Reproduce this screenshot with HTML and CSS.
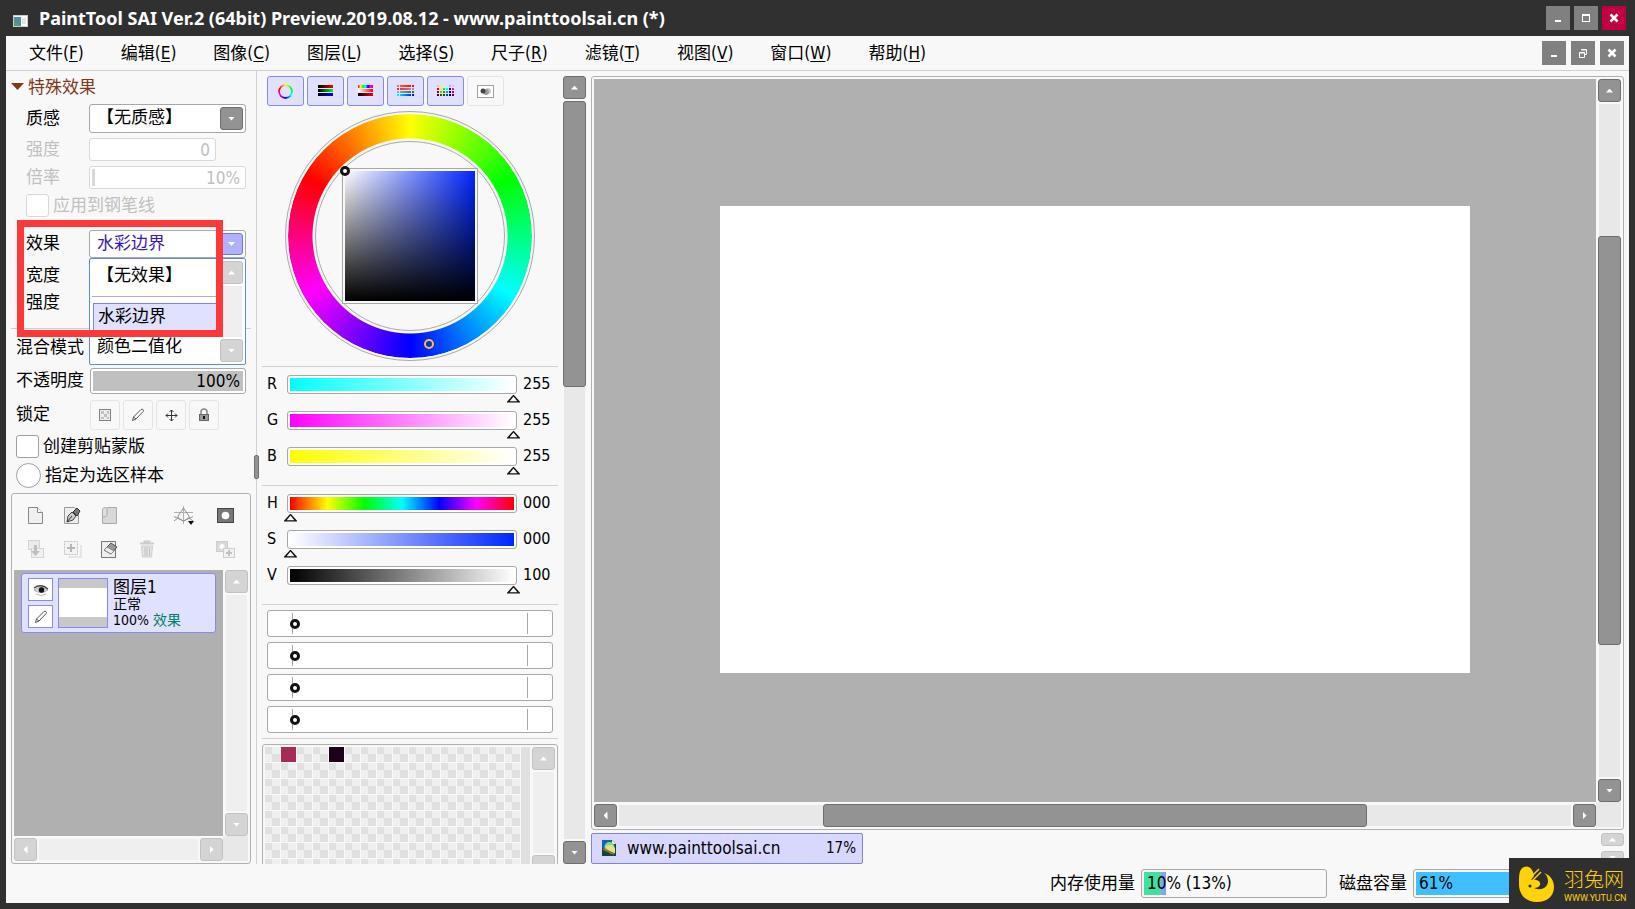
FILE: index.html
```html
<!DOCTYPE html>
<html lang="zh-CN">
<head>
<meta charset="utf-8">
<title>PaintTool SAI Ver.2</title>
<link rel="stylesheet" href="styles.css">
</head>
<body>
<header class="titlebar">
  <svg class="app-icon" width="15" height="12" viewBox="0 0 15 12"><rect x=".5" y=".5" width="14" height="11" fill="#fff" stroke="#c8ccd0"/><rect x="1" y="2" width="7" height="9" fill="#4f8fa0"/><path d="M1 6l7 5H1z" fill="#4fa06c"/><path d="M9 4h4M9 6h4M9 8h4" stroke="#c8c8c8"/></svg>
  <h1 class="title">PaintTool SAI Ver.2 (64bit) Preview.2019.08.12 - www.painttoolsai.cn (*)</h1>
  <div class="win-buttons win-buttons-main">
    <button class="win-btn" aria-label="最小化"><svg width="24" height="24"><path d="M9 14h6v2H9z" fill="#fff"/></svg></button>
    <button class="win-btn" aria-label="最大化"><svg width="24" height="24"><path d="M8 8h8v8H8zM9 10v5h6v-5z" fill="#fff" fill-rule="evenodd"/></svg></button>
    <button class="win-btn win-close" aria-label="关闭"><svg width="24" height="24"><path d="M8.500 8.500l7 7M15.500 8.500l-7 7" stroke="#fff" stroke-width="2.600"/></svg></button>
  </div>
</header>
<div class="window">
  <nav class="menubar">
    <button class="menu">文件(<u>F</u>)</button>
    <button class="menu">编辑(<u>E</u>)</button>
    <button class="menu">图像(<u>C</u>)</button>
    <button class="menu">图层(<u>L</u>)</button>
    <button class="menu">选择(<u>S</u>)</button>
    <button class="menu">尺子(<u>R</u>)</button>
    <button class="menu">滤镜(<u>T</u>)</button>
    <button class="menu">视图(<u>V</u>)</button>
    <button class="menu">窗口(<u>W</u>)</button>
    <button class="menu">帮助(<u>H</u>)</button>
    <div class="win-buttons win-buttons-doc">
      <button class="win-btn" aria-label="最小化文档"><svg width="24" height="24"><path d="M9 14h6v2H9z" fill="#fff"/></svg></button>
      <button class="win-btn" aria-label="还原文档"><svg width="24" height="24"><path d="M10.500 8.500h5v5h-2M10 9h6" fill="none" stroke="#fff"/><path d="M8.500 11.500h5v5h-5zM8 12h6" fill="none" stroke="#fff"/></svg></button>
      <button class="win-btn" aria-label="关闭文档"><svg width="24" height="24"><path d="M8.500 8.500l7 7M15.500 8.500l-7 7" stroke="#fff" stroke-width="2.600"/></svg></button>
    </div>
  </nav>

  <main class="workspace">
    <section class="left">
      <div class="effects">
        <h2 class="effects-title">特殊效果</h2>
        <div class="row row-select">
          <label class="label" for="texture">质感</label>
          <div class="combo"><select id="texture"><option>【无质感】</option></select><span class="combo-arrow"><i class="arrow down"></i></span></div>
        </div>
        <div class="row row-field disabled">
          <label class="label" for="tex-strength">强度</label>
          <input class="field field-short" id="tex-strength" value="0" disabled>
        </div>
        <div class="row row-field disabled">
          <label class="label" for="tex-scale">倍率</label>
          <input class="field field-scale" id="tex-scale" value="10%" disabled>
        </div>
        <label class="row row-field check disabled"><input type="checkbox" class="box" disabled><span class="check-text">应用到钢笔线</span></label>
        <div class="row row-effect">
          <label class="label" for="effect">效果</label>
          <div class="combo combo-open">
            <select id="effect"><option>水彩边界</option></select><span class="combo-arrow"><i class="arrow down"></i></span>
            <div class="popup">
              <ul class="popup-list">
                <li class="popup-item popup-none">【无效果】</li>
                <li class="popup-item popup-selected">水彩边界</li>
                <li class="popup-item popup-last">颜色二值化</li>
              </ul>
              <div class="scroll vertical pale">
                <button class="sb" aria-label="向上"><i class="arrow up"></i></button>
                <div class="track"></div>
                <button class="sb" aria-label="向下"><i class="arrow down"></i></button>
              </div>
            </div>
          </div>
        </div>
        <div class="effect-labels"><div class="label-row">宽度</div><div class="label-row">强度</div></div>
        <div class="highlight"></div>
      </div>
      <div class="layer-props">
        <div class="row row-effect"><span class="label">混合模式</span></div>
        <div class="row row-opacity"><label class="label" for="opacity">不透明度</label><input class="field field-opacity" id="opacity" value="100%"></div>
        <div class="row row-lock"><span class="label">锁定</span>
          <div class="lock-buttons">
            <button class="flat-btn" aria-label="锁定透明像素"><svg width="12" height="12"><rect x=".5" y=".5" width="11" height="11" fill="#eee" stroke="#808080"/><path d="M2 2h3v3H2zM8 2h2v3H8zM5 5h3v3H5zM2 8h3v2H2zM8 8h2v2H8z" fill="#c0c0c0"/></svg></button>
            <button class="flat-btn" aria-label="锁定绘图"><svg width="14" height="14"><path d="M1.500 12.500l1-3.500 7.500-7.500q1.500-.5 2 0 .8.800.2 2L5 11zM2.500 9L5 11" fill="#fff" stroke="#555"/></svg></button>
            <button class="flat-btn" aria-label="锁定移动"><svg width="13" height="13"><path d="M6.500 1v11M1 6.500h11M4.500 3l2-2 2 2M4.500 10l2 2 2-2M3 4.500l-2 2 2 2M10 4.500l2 2-2 2" fill="none" stroke="#333"/></svg></button>
            <button class="flat-btn" aria-label="全部锁定"><svg width="12" height="14"><path d="M3 7V4q0-3 3-3t3 3v3" fill="none" stroke="#888" stroke-width="1.500"/><rect x="1.500" y="6.500" width="9" height="6" fill="#999" stroke="#666"/><path d="M6 8v3" stroke="#111" stroke-width="2"/></svg></button>
          </div>
        </div>
        <label class="row row-check check"><input type="checkbox" class="box"><span class="check-text">创建剪贴蒙版</span></label>
        <label class="row row-radio check"><input type="radio" class="circle"><span class="check-text">指定为选区样本</span></label>
      </div>
      <div class="layer-panel">
        <div class="layer-tools">
          <button class="tool" aria-label="新建图层"><svg width="15" height="17"><path d="M.5.500h9l5 5v11H.5z" fill="#f0f0f0" stroke="#888"/><path d="M9.500.500v5h5" fill="#fff" stroke="#888"/></svg></button>
          <button class="tool" aria-label="新建钢笔图层"><svg width="17" height="17"><path d="M.5.500h10l4 4v12H.5z" fill="#eee" stroke="#999"/><path d="M3 15l1-6 4-4 4 4-3 4z" fill="#ccc" stroke="#444"/><path d="M9 5l4-4 3 3-3 5z" fill="#777" stroke="#333"/><path d="M3 15l5-6" stroke="#333"/></svg></button>
          <button class="tool" aria-label="新建图层组"><svg width="15" height="17"><path d="M.5 3.500v13h14V.500H5" fill="#d8d8d8" stroke="#aaa"/><path d="M.5 10V3q0-2.500 2.500-2.500T5 3v5q-1 2-4 2z" fill="#e0e0e0" stroke="#aaa"/></svg></button>
          <span></span>
          <button class="tool" aria-label="透视尺"><svg width="20" height="19"><path d="M9.500 0v18M0 6.500h19" fill="none" stroke="#b0b0b0"/><path d="M9.500 2L4 10v2l5.500 3 5.500-3v-2zM9.500 15L0 10.500M9.500 15L19 10.500M4 12l-4 3M15 12l4 3" fill="none" stroke="#909090"/><path d="M14 15h6l-3 4z" fill="#111"/></svg></button>
          <button class="tool" aria-label="图层蒙版"><svg width="17" height="15"><rect x=".5" y=".5" width="16" height="14" fill="#777" stroke="#444"/><circle cx="8.500" cy="7.500" r="3.800" fill="#fff"/></svg></button>
          <button class="tool" aria-label="向下转写"><svg width="16" height="18" opacity=".6"><rect x=".5" y=".5" width="11" height="9" fill="#e4e4e4" stroke="#bbb"/><rect x="3.500" y="8.500" width="12" height="9" fill="#eee" stroke="#bbb"/><path d="M6 5h3v6h3l-4.500 5L3 11h3z" fill="#999"/></svg></button>
          <button class="tool" aria-label="复制图层"><svg width="18" height="17" opacity=".7"><path d="M4 16h13V4" fill="none" stroke="#ddd" stroke-width="2"/><rect x=".5" y=".5" width="13" height="13" fill="#f2f2f2" stroke="#aaa" stroke-dasharray="2 1"/><path d="M7 3v8M3 7h8" stroke="#999" stroke-width="2"/></svg></button>
          <button class="tool" aria-label="清除图层"><svg width="17" height="17"><path d="M.5.500h14v16H.5z" fill="#eee" stroke="#777"/><path d="M3 9l7-7 6 4-6 7z" fill="#999" stroke="#555"/><path d="M3 9l3-3 7 4-3 3z" fill="#eee" stroke="#888"/></svg></button>
          <button class="tool" aria-label="删除图层"><svg width="16" height="18" opacity=".7"><path d="M1 3.500h14M5.500 3V1.500h5V3" fill="none" stroke="#bbb" stroke-width="2"/><path d="M2.500 6h11l-1 11h-9z" fill="#ddd" stroke="#bbb"/><path d="M6 7v9M8 7v9M10.500 7v9" stroke="#aaa"/></svg></button>
          <span></span>
          <button class="tool" aria-label="添加蒙版"><svg width="19" height="17" opacity=".7"><rect x=".5" y=".5" width="11" height="10" fill="#ccc" stroke="#bbb"/><circle cx="6" cy="5.500" r="2.500" fill="#fff"/><rect x="7.500" y="7.500" width="11" height="9" fill="#f0f0f0" stroke="#bbb"/><path d="M13 9v6M10 12h6" stroke="#aaa" stroke-width="2"/></svg></button>
        </div>
        <div class="layer-scroll">
          <div class="layer-list">
            <article class="layer">
              <div class="layer-flags">
                <button class="flag" aria-label="显示图层"><svg width="16" height="12"><path d="M1 6q7-5 14 0-7 5-14 0z" fill="#ddd" stroke="#aaa"/><path d="M1 4q7-5 14 1" fill="none" stroke="#444" stroke-width="1.500"/><circle cx="8.500" cy="6" r="2.800" fill="#111"/><path d="M3 10q5 3 10 0" fill="none" stroke="#bbb"/></svg></button>
                <button class="flag" aria-label="编辑图层"><svg width="14" height="14"><path d="M1.500 12.500l1-3.500 7.500-7.500q1.500-.5 2 0 .8.800.2 2L5 11zM2.500 9L5 11" fill="#fff" stroke="#555"/></svg></button>
              </div>
              <div class="thumb"><div class="thumb-image"></div></div>
              <div class="layer-text"><div class="layer-name">图层1</div><div class="layer-mode">正常</div><div class="layer-mode">100% <span class="layer-effect">效果</span></div></div>
            </article>
          </div>
          <div class="scroll vertical pale">
            <button class="sb" aria-label="向上"><i class="arrow up"></i></button><div class="track"></div><button class="sb" aria-label="向下"><i class="arrow down"></i></button>
          </div>
          <div class="scroll horizontal pale">
            <button class="sb" aria-label="向左"><i class="arrow back"></i></button><div class="track"></div><button class="sb" aria-label="向右"><i class="arrow next"></i></button>
          </div>
          <div class="corner"></div>
        </div>
      </div>
      <div class="splitter"></div>
    </section>

    <section class="middle">
      <div class="color-panel">
        <div class="color-tabs">
          <button class="color-tab on" aria-label="色环"><span class="mini-ring"></span></button>
          <button class="color-tab on" aria-label="RGB滑块"><svg width="15" height="12"><defs><linearGradient id="r"><stop stop-color="#000"/><stop offset="1" stop-color="red"/></linearGradient><linearGradient id="g"><stop stop-color="#000"/><stop offset="1" stop-color="lime"/></linearGradient><linearGradient id="b"><stop stop-color="#000"/><stop offset="1" stop-color="blue"/></linearGradient></defs><rect width="15" height="3" fill="url(#r)"/><rect y="4" width="15" height="3" fill="url(#g)"/><rect y="8" width="15" height="3" fill="url(#b)"/></svg></button>
          <button class="color-tab on" aria-label="HSV滑块"><svg width="15" height="12"><defs><linearGradient id="h"><stop stop-color="red"/><stop offset=".17" stop-color="#ff0"/><stop offset=".33" stop-color="lime"/><stop offset=".5" stop-color="cyan"/><stop offset=".67" stop-color="blue"/><stop offset=".83" stop-color="#f0f"/><stop offset="1" stop-color="red"/></linearGradient><linearGradient id="s"><stop stop-color="#fff"/><stop offset="1" stop-color="red"/></linearGradient></defs><rect width="15" height="3" fill="url(#h)"/><rect y="4" width="15" height="3" fill="url(#s)"/><rect y="8" width="15" height="3" fill="url(#r)"/></svg></button>
          <button class="color-tab on" aria-label="混色条"><svg width="17" height="12"><defs><linearGradient id="m1"><stop stop-color="#ff7a1a"/><stop offset="1" stop-color="red"/></linearGradient><linearGradient id="m2"><stop stop-color="#ff1060"/><stop offset="1" stop-color="#b090c0"/></linearGradient><linearGradient id="m3"><stop stop-color="#80c0a0"/><stop offset="1" stop-color="#207030"/></linearGradient><linearGradient id="m4"><stop stop-color="cyan"/><stop offset="1" stop-color="blue"/></linearGradient></defs><rect width="17" height="2" fill="url(#m1)"/><rect y="3" width="17" height="2" fill="url(#m2)"/><rect y="6" width="17" height="2" fill="url(#m3)"/><rect y="9" width="17" height="2" fill="url(#m4)"/><path d="M2 0h1v11H2zM14 0h1v11h-1z" fill="#e0e0ff"/></svg></button>
          <button class="color-tab on" aria-label="色板"><svg width="17" height="12"><g stroke-width="2" stroke-dasharray="2 1"><path d="M0 1h3" stroke="#ffb0b0"/><path d="M3 1h3" stroke="#ffe0a0"/><path d="M6 1h3" stroke="#d0ffb0"/><path d="M9 1h3" stroke="#b0ffe0"/><path d="M12 1h3" stroke="#b0b0ff"/><path d="M15 1h2" stroke="#ffb0ff"/><path d="M0 4h3" stroke="red"/><path d="M3 4h3" stroke="#ff0"/><path d="M6 4h3" stroke="lime"/><path d="M9 4h3" stroke="cyan"/><path d="M12 4h3" stroke="blue"/><path d="M15 4h2" stroke="#f0f"/><path d="M0 7h3" stroke="#a00"/><path d="M3 7h3" stroke="#aa0"/><path d="M6 7h3" stroke="#0a0"/><path d="M9 7h3" stroke="#0aa"/><path d="M12 7h3" stroke="#00a"/><path d="M15 7h2" stroke="#a0a"/><path d="M0 10h3" stroke="#500"/><path d="M3 10h3" stroke="#440"/><path d="M6 10h3" stroke="#050"/><path d="M9 10h3" stroke="#055"/><path d="M12 10h3" stroke="#005"/><path d="M15 10h2" stroke="#505"/></g></svg></button>
          <button class="color-tab" aria-label="便笺"><svg width="17" height="13"><rect x=".5" y=".5" width="16" height="12" fill="#fff" stroke="#a0a0a0"/><circle cx="11" cy="6" r="3" fill="#ccc"/><circle cx="9" cy="7" r="3" fill="#999"/><circle cx="6" cy="6" r="2.500" fill="#444"/></svg></button>
        </div>
        <div class="wheel">
          <div class="wheel-ring"></div>
          <div class="wheel-inner"></div>
          <div class="sv"></div>
          <span class="marker marker-sv"></span>
          <span class="marker marker-hue"></span>
        </div>
        <div class="sliders">
          <div class="slider"><label for="s-r">R</label><div class="bar"><div class="fill fill-r"></div><input id="s-r" type="range" max="255" value="255"></div><output>255</output></div>
          <div class="slider"><label for="s-g">G</label><div class="bar"><div class="fill fill-g"></div><input id="s-g" type="range" max="255" value="255"></div><output>255</output></div>
          <div class="slider"><label for="s-b">B</label><div class="bar"><div class="fill fill-b"></div><input id="s-b" type="range" max="255" value="255"></div><output>255</output></div>
        </div>
        <div class="sliders">
          <div class="slider"><label for="s-h">H</label><div class="bar"><div class="fill fill-h"></div><input id="s-h" type="range" max="360" value="0"></div><output>000</output></div>
          <div class="slider"><label for="s-s">S</label><div class="bar"><div class="fill fill-s"></div><input id="s-s" type="range" max="100" value="0"></div><output>000</output></div>
          <div class="slider"><label for="s-v">V</label><div class="bar"><div class="fill fill-v"></div><input id="s-v" type="range" max="100" value="100"></div><output>100</output></div>
        </div>
        <div class="mixers">
          <div class="mixer"><span class="marker"></span></div>
          <div class="mixer"><span class="marker"></span></div>
          <div class="mixer"><span class="marker"></span></div>
          <div class="mixer"><span class="marker"></span></div>
        </div>
        <div class="swatches">
          <div class="swatch-grid"><span class="swatch swatch-rose"></span><span class="swatch swatch-plum"></span></div>
          <div class="swatch-edge"></div>
          <div class="scroll vertical pale">
            <button class="sb" aria-label="向上"><i class="arrow up"></i></button><div class="track"></div><button class="sb" aria-label="向下"><i class="arrow down"></i></button>
          </div>
        </div>
      </div>
      <div class="scroll vertical">
        <button class="sb" aria-label="向上"><i class="arrow up"></i></button>
        <div class="track"><div class="grip grip-panel"></div><div class="rest rest-panel"></div></div>
        <button class="sb" aria-label="向下"><i class="arrow down"></i></button>
      </div>
    </section>

    <section class="right">
      <div class="view">
        <div class="stage"><div class="paper"></div></div>
        <div class="scroll vertical">
          <button class="sb" aria-label="向上"><i class="arrow up"></i></button>
          <div class="track"><div class="rest rest-v"></div><div class="grip grip-v"></div><div class="rest rest-v"></div></div>
          <button class="sb" aria-label="向下"><i class="arrow down"></i></button>
        </div>
        <div class="scroll horizontal">
          <button class="sb" aria-label="向左"><i class="arrow back"></i></button>
          <div class="track"><div class="rest rest-h"></div><div class="grip grip-h"></div><div class="rest rest-h"></div></div>
          <button class="sb" aria-label="向右"><i class="arrow next"></i></button>
        </div>
        <div class="corner"></div>
      </div>
      <div class="doc-tabs">
        <button class="doc-tab">
          <svg width="14" height="16"><path d="M0 0h10l4 4v12H0z" fill="#0a4a3a"/><path d="M0 0h10v3L4 8H0z" fill="#1060c0"/><path d="M10 0l4 4h-4z" fill="#eee"/><circle cx="7.500" cy="7" r="5" fill="#80e070"/><path d="M3 6l7-1 3 3v5l-4 1z" fill="#e8e090"/><path d="M1 9l11 5" stroke="#a06828" stroke-width="2"/></svg>
          <span class="doc-name">www.painttoolsai.cn</span><span class="doc-zoom">17%</span>
        </button>
        <div class="tab-scroll"><button class="sb" aria-label="上一行"><i class="arrow up"></i></button><button class="sb" aria-label="下一行"><i class="arrow down"></i></button></div>
      </div>
    </section>
  </main>

  <footer class="status">
    <div class="stat"><span>内存使用量</span><div class="meter meter-memory">10% (13%)</div></div>
    <div class="stat"><span>磁盘容量</span><div class="meter meter-disk">61%</div></div>
  </footer>
</div>
<div class="watermark">
  <svg width="36" height="37" viewBox="0 0 36 37"><path d="M5 1C10-1 14 3 15 10l-3 4C19 13 22 16 21 19c-1 2-3 3-6 3 7 3 13 0 14-6 0-4-1-7-4-9 6 2 10 7 10 14 0 9-7 15-17 15C7 36 0 29 0 18 0 9 0 3 5 1z" fill="#ffd20a"/><path d="M10 13L20 3M14 14l8-8" stroke="#ffd20a" stroke-width="1.500" fill="none"/><circle cx="11" cy="20" r="1.600" fill="#2f2f2f"/></svg>
  <div class="watermark-text"><div class="watermark-name">羽兔网</div><div class="watermark-url">WWW.YUTU.CN</div></div>
</div>
</body>
</html>
```
FILE: styles.css
```css
* { box-sizing: border-box; }
body {
  margin: 0;
  height: 100vh;
  display: flex;
  flex-direction: column;
  padding: 0 6px 6px;
  background: #303030;
  color: #000;
  font: 400 17px/20px "DejaVu Sans Condensed", "Noto Sans CJK SC", sans-serif;
  overflow: hidden;
}
button, input, select { font: inherit; color: inherit; margin: 0; padding: 0; border: 0; }
button { display: flex; align-items: center; justify-content: center; background: none; }
h1, h2, ul { margin: 0; padding: 0; list-style: none; }
svg { display: block; flex: none; }

/* title bar and menu */
.titlebar { display: flex; align-items: center; height: 36px; flex: none; padding: 0 3px 0 7px; }
.app-icon { margin-top: 6px; }
.title { flex: 1; margin-left: 11px; color: #fff; font: bold 18px/20px "Noto Sans", sans-serif; white-space: nowrap; }
.win-buttons { display: flex; }
.win-buttons-main { gap: 4px; }
.win-buttons-doc { gap: 5px; margin-left: auto; }
.win-btn { width: 24px; height: 24px; background: #808080; }
.win-close { background: #c00040; }
.window { flex: 1; min-height: 0; display: flex; flex-direction: column; background: #f8f8f8; }
.menubar { display: flex; align-items: center; gap: 37px; height: 35px; flex: none; padding: 0 5px 0 23px; border-bottom: 1px solid #d0d0d0; }
.menu { white-space: nowrap; }
.menu u { text-underline-offset: 2px; text-decoration-thickness: 1px; }
.workspace { flex: 1; min-height: 0; display: flex; }

/* scroll bars */
.scroll { display: flex; gap: 2px; }
.vertical { flex-direction: column; width: 23px; }
.horizontal { height: 23px; }
.sb { width: 23px; height: 23px; flex: none; background: #939393; border: 1px solid #6e6e6e; border-radius: 3px; }
.track { flex: 1; min-width: 0; min-height: 0; display: flex; background: #e8e8e8; }
.vertical .track { flex-direction: column; margin: 0 1px; }
.horizontal .track { margin: 1px 0; }
.grip { background: #939393; border: 1px solid #6e6e6e; border-radius: 3px; }
.vertical .grip { margin: 0 -1px; }
.horizontal .grip { margin: -1px 0; }
.pale .track { background: #efefef; }
.pale .sb, .tab-scroll .sb { background: #d4d4d4; border-color: #c2c2c2; }
.arrow { width: 7px; height: 4px; background: #fff; }
.up { clip-path: polygon(50% 0, 100% 100%, 0 100%); }
.down { clip-path: polygon(0 0, 100% 0, 50% 100%); }
.back { width: 4px; height: 8px; clip-path: polygon(100% 0, 100% 100%, 0 50%); }
.next { width: 4px; height: 8px; clip-path: polygon(0 0, 100% 50%, 0 100%); }
.corner { background: #e8e8e8; margin: -2px 0 0 -2px; }
.grip-panel { flex: 285; }
.rest-panel { flex: 453; }
.rest-v { flex: 133; }
.grip-v { flex: 408; }
.rest-h { flex: 204; }
.grip-h { flex: 544; }

/* left column */
.left { position: relative; width: 251px; flex: none; display: flex; flex-direction: column; padding: 0 5px; border-right: 1px solid #d0d0d0; }
.effects { position: relative; display: flex; flex-direction: column; gap: 5px; padding-bottom: 12px; border-bottom: 1px solid #d0d0d0; }
.effects-title { display: flex; align-items: center; gap: 4px; height: 28px; padding-top: 3px; font-size: 17px; font-weight: 400; color: #803818; }
.effects-title::before { content: ""; width: 13px; height: 7px; background: #803818; clip-path: polygon(0 0, 100% 0, 50% 100%); }
.row { display: flex; align-items: center; }
.effects .row { padding-left: 15px; margin-right: 5px; }
.effects .label { width: 63px; flex: none; }
.label, .check-text { padding-bottom: 2px; }
.disabled { color: #c0c0c0; }
.row-select { height: 29px; }
.row-field { height: 23px; }
.row-effect { height: 28px; }
.effects .row-effect { margin-top: 8px; }
.combo { position: relative; flex: 1; align-self: stretch; background: #fff; border: 1px solid #a8a8a8; border-radius: 3px; }
.combo select { appearance: none; width: 100%; height: 100%; padding: 0 26px 3px 7px; background: none; outline: 0; }
.combo-arrow { position: absolute; top: 2px; right: 2px; bottom: 2px; width: 23px; display: flex; align-items: center; justify-content: center; background: #939393; border: 1px solid #6e6e6e; border-radius: 3px; pointer-events: none; }
.combo-open select { color: #3818c0; }
.combo-open .combo-arrow { background: #b0b0ff; border-color: #7070ff; }
.popup { position: absolute; top: 27px; left: -1px; right: -1px; height: 107px; z-index: 1; display: flex; gap: 3px; padding: 2px; background: #fff; border: 1px solid #5a8ed8; border-radius: 2px; }
.popup-list { flex: 1; display: flex; flex-direction: column; }
.popup-item { height: 28px; line-height: 26px; padding-left: 5px; }
.popup-none { height: 36px; line-height: 28px; border-bottom: 1px solid #b0b0b0; }
.popup-selected { margin-top: 6px; padding-left: 4px; margin-left: 1px; line-height: 24px; border: 1px solid #8080f8; background: #e0e0ff; }
.popup-last { line-height: 30px; }
.field { width: 100%; min-width: 0; height: 100%; padding: 0 6px; text-align: right; background: #fff; border: 1px solid #a8a8a8; border-radius: 3px; }
.disabled .field { padding: 0 5px; border-color: #d8d8d8; }
.field-short { margin-right: 30px; }
.field-scale { background: linear-gradient(#d8d8d8, #d8d8d8) 2px 2px / 3px 17px no-repeat #fff; }
.check { gap: 4px; }
.box, .circle { appearance: none; width: 23px; height: 23px; flex: none; background: #fff; border: 1px solid #a0a0a0; border-radius: 3px; }
.disabled .box { border-color: #d8d8d8; }
.circle { width: 25px; height: 25px; border-radius: 50%; }
.effect-labels { margin-top: -2px; padding: 1px 0 0 15px; }
.label-row { height: 27px; line-height: 27px; }
.highlight { position: absolute; left: 6px; top: 149px; width: 206px; height: 117px; z-index: 2; border: 7px solid #fc3838; pointer-events: none; }
.layer-props { display: flex; flex-direction: column; padding: 5px; }
.layer-props .label { width: 74px; flex: none; }
.row-opacity { height: 26px; margin: 6px 0; }
.field-opacity { padding: 0 5px; background: linear-gradient(#c0c0c0, #c0c0c0) 50% 50% / calc(100% - 4px) 20px no-repeat #fff; }
.row-lock { height: 30px; }
.lock-buttons { display: flex; gap: 3px; }
.flat-btn { width: 30px; height: 30px; border: 1px solid #e4e4e4; border-radius: 3px; }
.row-check, .row-radio { margin-top: 5px; }
.layer-panel { flex: 1; min-height: 0; display: flex; flex-direction: column; padding: 2px; border: 1px solid #b0b0b0; border-radius: 3px; }
.layer-tools { display: grid; grid-template-columns: repeat(5, 37px) 1fr; grid-auto-rows: 34px; padding: 2px 0 4px 3px; }
.layer-scroll { flex: 1; min-height: 0; display: grid; grid-template: 1fr 23px / 1fr 23px; gap: 2px; }
.layer-list { background: #b0b0b0; padding: 3px 7px; }
.layer { display: flex; gap: 5px; height: 60px; padding: 4px 6px; background: #e0e0ff; border: 1px solid #8888f8; border-radius: 3px; }
.layer-flags { display: flex; flex-direction: column; gap: 4px; }
.flag { width: 25px; height: 23px; background: #fff; border: 1px solid #8888f8; }
.thumb { width: 50px; height: 50px; background: #c8c8c8; border: 1px solid #8888f8; padding: 9px 0; }
.thumb-image { height: 29px; background: #fff; }
.layer-text { font-size: 14px; line-height: 16px; white-space: nowrap; }
.layer-name { font-size: 17px; line-height: 18px; }
.layer-effect { color: #008060; }
.splitter { position: absolute; right: -3px; top: 384px; width: 5px; height: 24px; background: #939393; border: 1px solid #707070; border-radius: 2px; }

/* colour column */
.middle { display: flex; gap: 5px; width: 329px; flex: none; padding: 5px 0 0 5px; overflow: hidden; }
.color-panel { flex: 1; display: flex; flex-direction: column; }
.color-tabs { display: flex; gap: 3px; padding-left: 5px; }
.color-tab { width: 37px; height: 30px; border: 1px solid #e4e4e4; border-radius: 3px; }
.color-tab.on { background: #e0e0ff; border-color: #8888f8; }
.mini-ring { width: 15px; height: 15px; border-radius: 50%; background: conic-gradient(#ff0, lime, cyan, blue, #f0f, red, #ff0); mask: radial-gradient(circle, transparent 5px, #000 6px); }
.wheel { position: relative; align-self: center; width: 250px; height: 250px; margin: 5px 0; border: 1px solid #a8a8a8; border-radius: 50%; }
.wheel-ring { position: absolute; inset: 2px; border-radius: 50%; background: conic-gradient(#ff0, lime, cyan, blue, #f0f, red, #ff0); mask: radial-gradient(circle, transparent 97px, #000 98px); }
.wheel-inner { position: absolute; inset: 29px; border: 1px solid #a8a8a8; border-radius: 50%; }
.sv { position: absolute; inset: 56px; border: 1px solid #a8a8a8; padding: 2px; background: linear-gradient(transparent, #000) content-box, linear-gradient(to right, #fff, #0026ff) content-box, #f8f8f8; }
.marker { position: absolute; width: 10px; height: 10px; border: 3px solid #111; border-radius: 50%; }
.marker-sv { left: 54px; top: 54px; background: #fff; }
.marker-hue { left: 138px; top: 227px; border: 2px solid #ffc800; }
.sliders { display: flex; flex-direction: column; gap: 8px; padding: 8px 0 10px 5px; border-top: 1px solid #d0d0d0; }
.slider { display: flex; height: 28px; font-size: 16px; line-height: 18px; }
.slider label { width: 20px; }
.slider output { width: 35px; }
.bar { position: relative; flex: 1; height: 19px; margin-right: 6px; padding: 2px; background: #fff; border: 1px solid #a8a8a8; border-radius: 3px; }
.fill { height: 13px; }
.fill-r { background: linear-gradient(to right, #0ff, #fff); }
.fill-g { background: linear-gradient(to right, #f0f, #fff); }
.fill-b { background: linear-gradient(to right, #ff0, #fff); }
.fill-h { background: linear-gradient(to right, red, #ff0, lime, cyan, blue, #f0f, red); }
.fill-s { background: linear-gradient(to right, #fff, #0026ff); }
.fill-v { background: linear-gradient(to right, #000, #fff); }
.bar input { appearance: none; position: absolute; left: -4px; top: 18px; width: calc(100% + 8px); height: 9px; background: none; }
.bar input::-webkit-slider-thumb { appearance: none; width: 13px; height: 8px; background: #111; clip-path: polygon(50% 0, 100% 90%, 100% 100%, 0 100%, 0 90%, 50% 0, 50% 25%, 20% 85%, 80% 85%, 50% 25%); }
.mixers { display: flex; flex-direction: column; gap: 5px; padding: 5px; border: solid #d0d0d0; border-width: 1px 0; }
.mixer { position: relative; height: 27px; border: 1px solid #a8a8a8; border-radius: 3px; background: linear-gradient(#a8a8a8, #a8a8a8) 24px 2px / 1px 21px no-repeat, linear-gradient(#a8a8a8, #a8a8a8) calc(100% - 24px) 2px / 1px 21px no-repeat, #fff; }
.mixer .marker { left: 22px; top: 8px; background: #fff; }
.swatches { flex: 1; min-height: 0; display: flex; margin: 5px 0 -17px; padding: 2px; border: 1px solid #b0b0b0; border-radius: 3px; }
.swatch-grid { position: relative; flex: 1; background: linear-gradient(to right, transparent 15px, #f8f8f8 15px) 0 0 / 16px 16px, linear-gradient(transparent 15px, #f8f8f8 15px) 0 0 / 16px 16px, conic-gradient(from 0deg at 7px 7px, #efefef 25%, #e0e0e0 0 50%, #efefef 0 75%, #e0e0e0 0) 0 0 / 16px 16px; }
.swatch { position: absolute; top: 0; width: 15px; height: 15px; }
.swatch-rose { left: 16px; background: #a52c58; }
.swatch-plum { left: 64px; background: #1c001c; }
.swatch-edge { width: 9px; margin-right: 2px; background: #e0e0e0; }

/* canvas column */
.right { flex: 1; min-width: 0; display: flex; flex-direction: column; padding: 5px 5px 0; }
.view { flex: 1; min-height: 0; display: grid; grid-template: 1fr 23px / 1fr 23px; gap: 2px; padding: 2px; border: 1px solid #b0b0b0; border-radius: 3px; }
.stage { display: flex; align-items: center; justify-content: center; padding-bottom: 2px; background: #b0b0b0; }
.paper { width: 74.9%; aspect-ratio: 750 / 467; background: #fff; }
.doc-tabs { display: flex; justify-content: space-between; height: 34px; flex: none; padding-top: 3px; overflow: hidden; }
.doc-tab { width: 272px; padding: 0 6px 2px 10px; background: #d8d8ff; border: 1px solid #8080f8; border-radius: 2px; }
.doc-name { flex: 1; margin-left: 11px; text-align: left; }
.doc-zoom { font-size: 15px; }
.tab-scroll { display: flex; flex-direction: column; gap: 5px; }
.tab-scroll .sb { height: 13px; }

/* status bar and mark */
.status { display: flex; justify-content: flex-end; gap: 12px; height: 39px; flex: none; padding: 5px 30px 5px 0; }
.stat { display: flex; gap: 6px; line-height: 28px; }
.meter { width: 186px; height: 29px; padding-left: 5px; line-height: 27px; border: 1px solid #a8a8a8; border-radius: 3px; background: #fff; }
.meter-memory { background: linear-gradient(to right, #40e0a0 17px, #88a0f8 17px) 2px 2px / 22px 23px no-repeat #f8f8f8; }
.meter-disk { background: linear-gradient(#40bfff, #40bfff) 2px 2px / 61% 23px no-repeat #f8f8f8; }
.watermark { position: absolute; right: 0; bottom: 0; width: 126px; height: 51px; display: flex; gap: 9px; padding: 8px 0 0 10px; background: #2f2f2f; color: #ffd20a; z-index: 3; }
.watermark-text { white-space: nowrap; }
.watermark-name { padding-top: 2px; font-size: 20px; font-weight: 300; line-height: 24px; }
.watermark-url { font: 9px/12px Roboto, sans-serif; }
```
